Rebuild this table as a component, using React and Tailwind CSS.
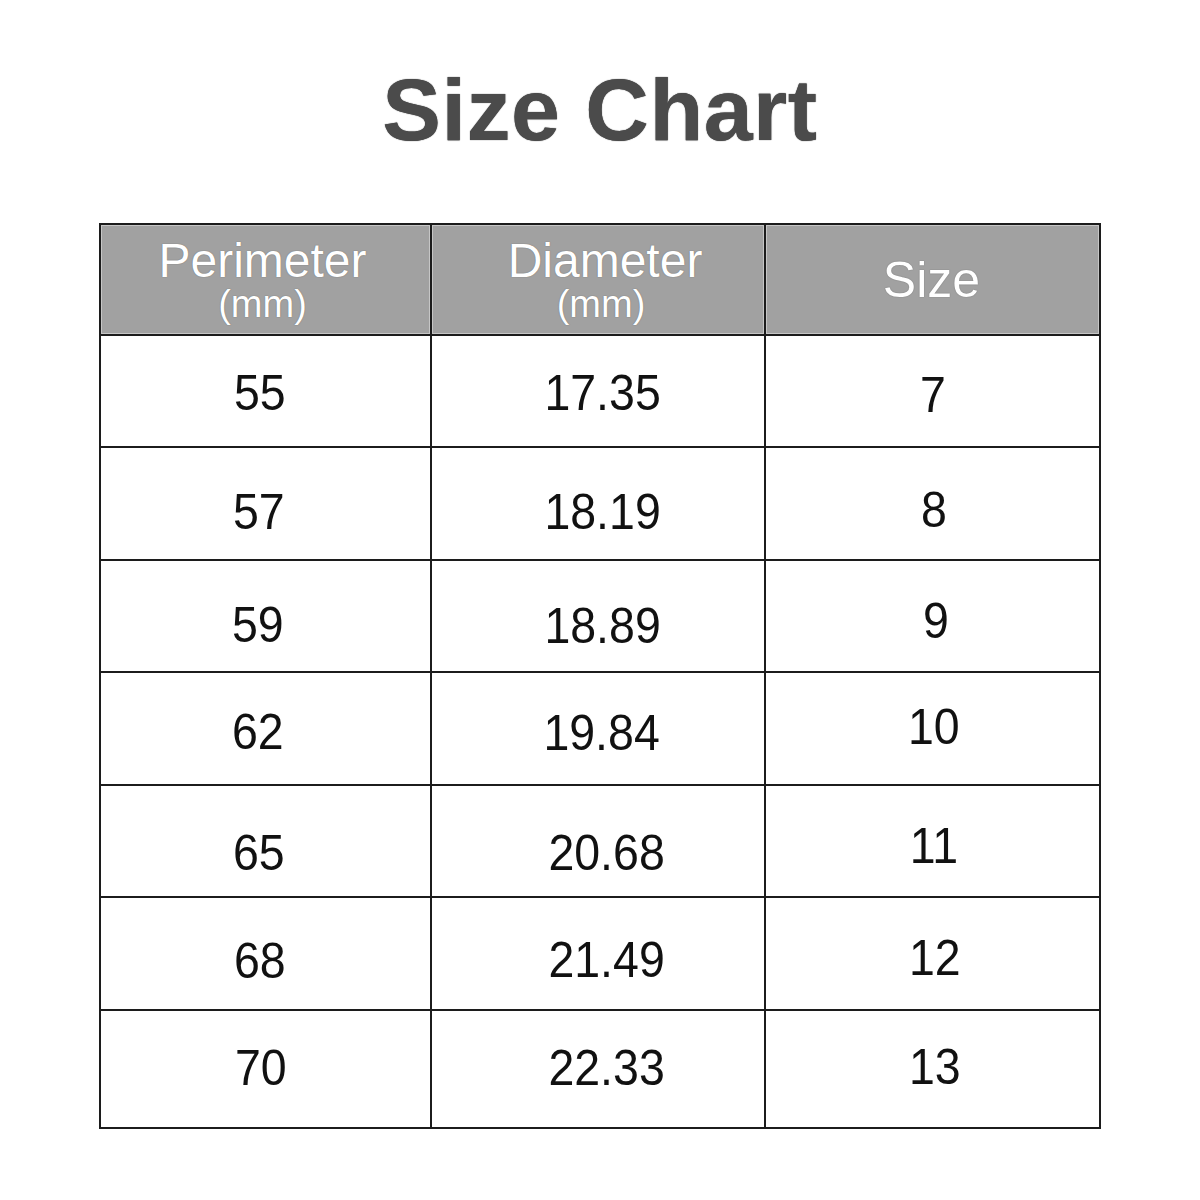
export default function App() {
  const rows = [
    { h: "h-[110px]", cells: [
      { t: "55", c: "-translate-x-[6px] translate-y-[2px]" },
      { t: "17.35", c: "translate-x-[5px] translate-y-[2px]" },
      { t: "7", c: "translate-x-[0px] translate-y-[4px]" },
    ] },
    { h: "h-[111px]", cells: [
      { t: "57", c: "-translate-x-[7px] translate-y-[8px]" },
      { t: "18.19", c: "translate-x-[5px] translate-y-[8px]" },
      { t: "8", c: "translate-x-[1px] translate-y-[6px]" },
    ] },
    { h: "h-[110px]", cells: [
      { t: "59", c: "-translate-x-[8px] translate-y-[9px]" },
      { t: "18.89", c: "translate-x-[5px] translate-y-[10px]" },
      { t: "9", c: "translate-x-[3px] translate-y-[5px]" },
    ] },
    { h: "h-[111px]", cells: [
      { t: "62", c: "-translate-x-[8px] translate-y-[3px]" },
      { t: "19.84", c: "translate-x-[4px] translate-y-[4px]" },
      { t: "10", c: "translate-x-[1px] -translate-y-[2px]" },
    ] },
    { h: "h-[110px]", cells: [
      { t: "65", c: "-translate-x-[7px] translate-y-[12px]" },
      { t: "20.68", c: "translate-x-[9px] translate-y-[12px]" },
      { t: "11", c: "translate-x-[1px] translate-y-[5px]" },
    ] },
    { h: "h-[111px]", cells: [
      { t: "68", c: "-translate-x-[6px] translate-y-[7px]" },
      { t: "21.49", c: "translate-x-[9px] translate-y-[6px]" },
      { t: "12", c: "translate-x-[2px] translate-y-[4px]" },
    ] },
    { h: "h-[116px]", cells: [
      { t: "70", c: "-translate-x-[5px] -translate-y-[1px]" },
      { t: "22.33", c: "translate-x-[9px] -translate-y-[1px]" },
      { t: "13", c: "translate-x-[2px] -translate-y-[2px]" },
    ] },
  ];

  return (
    <div className="w-[1200px] h-[1200px] bg-white flex flex-col items-center font-['Liberation_Sans',Arial,sans-serif]">
      <div className="mt-[66px] h-[88px] text-[88px] leading-[88px] font-bold text-[#4b4b4b] [text-shadow:0_0_1px_#222] tracking-[0.5px]">
        Size Chart
      </div>
      <div className="mt-[69px] w-[1002px] border-2 border-[#1c1c1c] bg-[#1c1c1c] grid grid-cols-[329px_332px_333px] gap-[2px]">
        <div className="h-[109px] bg-[#a1a1a1] border border-[#c6c6c6] flex flex-col items-center pt-[11px] text-white [text-shadow:0_0_1px_#555]">
          <div className="text-[48px] leading-[48px] -translate-x-[3px]">Perimeter</div>
          <div className="text-[38px] leading-[38px] -translate-x-[3px]">(mm)</div>
        </div>
        <div className="h-[109px] bg-[#a1a1a1] border border-[#c6c6c6] flex flex-col items-center pt-[11px] text-white [text-shadow:0_0_1px_#555]">
          <div className="text-[48px] leading-[48px] translate-x-[7px]">Diameter</div>
          <div className="text-[38px] leading-[38px] translate-x-[3px]">(mm)</div>
        </div>
        <div className="h-[109px] bg-[#a1a1a1] border border-[#c6c6c6] flex flex-col items-center pt-[29px] text-white [text-shadow:0_0_1px_#555]">
          <div className="text-[50px] leading-[50px] -translate-x-[1px]">Size</div>
        </div>
        {rows.map((r, i) =>
          r.cells.map((cell, j) => (
            <div key={i + "-" + j} className={`${r.h} bg-white flex items-center justify-center`}>
              <span className={`inline-block text-[50px] leading-[50px] text-[#111] scale-x-[0.93] ${cell.c}`}>{cell.t}</span>
            </div>
          ))
        )}
      </div>
    </div>
  );
}
